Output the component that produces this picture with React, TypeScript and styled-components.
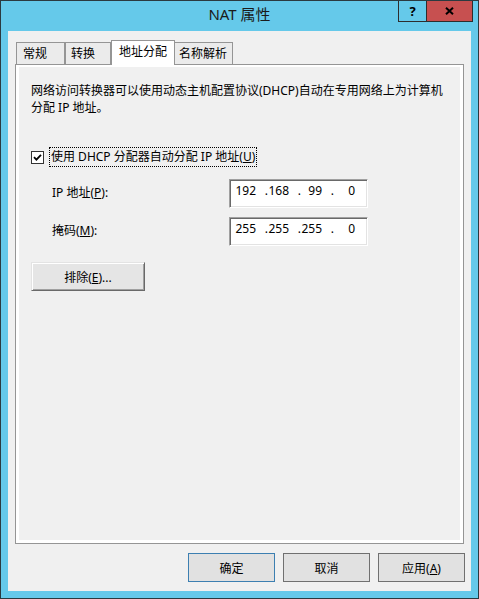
import styled, { createGlobalStyle } from "styled-components";

const GlobalStyle = createGlobalStyle`
  html, body {
    margin: 0;
    padding: 0;
  }
  body {
    font-family: "Segoe UI", "Noto Sans", "Noto Sans CJK SC", sans-serif;
    font-size: 12px;
    color: #000;
    background: #fff;
  }
`;

const Frame = styled.div`
  width: 479px;
  height: 599px;
  box-sizing: border-box;
  border: 1px solid #2b3a40;
  background: #65c9ea;
  padding: 0 7px 7px;
  display: flex;
  flex-direction: column;
`;

const TitleBar = styled.div`
  height: 30px;
  display: grid;
  grid-template-columns: 1fr auto 1fr;
`;

const Title = styled.div`
  grid-column: 2;
  align-self: center;
  font-size: 15px;
  line-height: 20px;
  padding-bottom: 4px;
  color: #1b1b1b;
  white-space: nowrap;
`;

const CaptionButtons = styled.div`
  justify-self: end;
  align-self: start;
  display: flex;
  margin-right: -2px;
`;

const CaptionButton = styled.div<{ $close?: boolean }>`
  box-sizing: border-box;
  width: ${(p) => (p.$close ? 47 : 28)}px;
  height: 21px;
  border-left: 1px solid #2d2d2d;
  border-bottom: 1px solid #2d2d2d;
  border-right: ${(p) => (p.$close ? "1px solid #2d2d2d" : "none")};
  background: ${(p) => (p.$close ? "#c75050" : "transparent")};
  display: flex;
  align-items: center;
  justify-content: center;
  font-weight: bold;
  font-size: 13px;
  line-height: 13px;
`;

const Client = styled.div`
  flex: 1;
  background: #f0f0f0;
  padding: 9px 7px 9px;
  display: flex;
  flex-direction: column;
`;

const TabStrip = styled.div`
  height: 24px;
  display: flex;
  align-items: flex-end;
  padding-left: 1px;
  position: relative;
  z-index: 1;
`;

const Tab = styled.div<{ $active?: boolean; $w: number; $pl: number; $ml?: number }>`
  box-sizing: border-box;
  width: ${(p) => p.$w}px;
  height: ${(p) => (p.$active ? 25 : 22)}px;
  margin-bottom: ${(p) => (p.$active ? -1 : 0)}px;
  margin-left: ${(p) => p.$ml ?? 0}px;
  border: 1px solid #959595;
  border-bottom: none;
  background: ${(p) => (p.$active ? "#fff" : "#ebebeb")};
  padding-left: ${(p) => p.$pl}px;
  padding-bottom: ${(p) => (p.$active ? 3 : 0)}px;
  line-height: 21px;
  white-space: nowrap;
`;

const Panel = styled.div`
  flex: 1;
  border: 1px solid #959595;
  background: #fff;
  padding: 2px 3px 3px;
  display: flex;
  flex-direction: column;
`;

const Page = styled.div`
  flex: 1;
  background: #f0f0f0;
  padding: 15px 12px 0;
  display: flex;
  flex-direction: column;
  align-items: flex-start;
`;

const Description = styled.div`
  line-height: 17px;
  white-space: nowrap;
`;

const CheckRow = styled.div`
  margin-top: 31px;
  display: flex;
  align-items: center;
`;

const CheckBox = styled.div`
  box-sizing: border-box;
  width: 13px;
  height: 13px;
  border: 1px solid #333;
  background: #fff;
  margin-right: 5px;
  display: flex;
  align-items: center;
  justify-content: center;
`;

const FocusLabel = styled.div`
  border: 1px dotted #000;
  padding: 0 1px;
  line-height: 18px;
  white-space: nowrap;
`;

const FieldRow = styled.div<{ $top: number }>`
  margin-top: ${(p) => p.$top}px;
  padding-left: 21px;
  display: flex;
  align-items: center;
`;

const FieldLabel = styled.div`
  width: 177px;
  line-height: 17px;
  padding-bottom: 3px;
  white-space: nowrap;
`;

const IpBox = styled.div`
  box-sizing: border-box;
  width: 139px;
  height: 29px;
  border: 1px solid;
  border-color: #a0a0a0 #ffffff #ffffff #a0a0a0;
  box-shadow: inset 1px 1px 0 #696969, inset -1px -1px 0 #e3e3e3;
  background: #fff;
  padding: 2px 0 0 5px;
  display: flex;
  align-items: flex-start;
  line-height: 17px;
`;

const Octet = styled.span`
  width: 21px;
  text-align: right;
`;

const Dot = styled.span`
  width: 12px;
  text-align: right;
`;

const RaisedButton = styled.button`
  margin-top: 16px;
  box-sizing: border-box;
  width: 114px;
  height: 29px;
  padding: 0;
  font: inherit;
  color: #000;
  background: #e5e5e5;
  border: 1px solid;
  border-color: #e3e3e3 #696969 #696969 #e3e3e3;
  box-shadow: inset 1px 1px 0 #fff, inset -1px -1px 0 #a0a0a0;
`;

const ButtonRow = styled.div`
  margin-top: 9px;
  margin-right: -1px;
  display: flex;
  justify-content: flex-end;
  gap: 8px;
`;

const DialogButton = styled.button<{ $default?: boolean }>`
  box-sizing: border-box;
  width: 87px;
  height: 29px;
  padding: 0;
  font: inherit;
  color: #000;
  background: #e1e1e1;
  border: 1px solid ${(p) => (p.$default ? "#3c7fb1" : "#707070")};
`;

const Key = styled.u`
  text-underline-offset: 1px;
`;

const tabs = [
  { label: "常规", w: 49, pl: 6 },
  { label: "转换", w: 46, pl: 5, ml: 0 },
  { label: "地址分配", w: 64, pl: 7, active: true },
  { label: "名称解析", w: 59, pl: 4, ml: -1 },
];

function IpAddress({ parts }: { parts: string[] }) {
  return (
    <IpBox>
      {parts.map((p, i) => (
        <span key={i} style={{ display: "contents" }}>
          <Octet>{p}</Octet>
          {i < parts.length - 1 ? <Dot>.</Dot> : null}
        </span>
      ))}
    </IpBox>
  );
}

function App() {
  return (
    <>
      <GlobalStyle />
      <Frame>
        <TitleBar>
          <Title>NAT 属性</Title>
          <CaptionButtons>
            <CaptionButton>?</CaptionButton>
            <CaptionButton $close>
              <svg width="9" height="8" viewBox="0 0 9 8">
                <path d="M1 0.8 L8 7.2 M8 0.8 L1 7.2" stroke="#000" strokeWidth="2" />
              </svg>
            </CaptionButton>
          </CaptionButtons>
        </TitleBar>
        <Client>
          <TabStrip>
            {tabs.map((t) => (
              <Tab key={t.label} $active={t.active} $w={t.w} $pl={t.pl} $ml={t.ml}>
                {t.label}
              </Tab>
            ))}
          </TabStrip>
          <Panel>
            <Page>
              <Description>
                网络访问转换器可以使用动态主机配置协议(DHCP)自动在专用网络上为计算机
                <br />
                分配 IP 地址。
              </Description>
              <CheckRow>
                <CheckBox>
                  <svg width="9" height="9" viewBox="0 0 9 9">
                    <path d="M1 4.2 L3.4 6.6 L8 1.8" fill="none" stroke="#000" strokeWidth="1.8" />
                  </svg>
                </CheckBox>
                <FocusLabel>
                  使用 DHCP 分配器自动分配 IP 地址(<Key>U</Key>)
                </FocusLabel>
              </CheckRow>
              <FieldRow $top={12}>
                <FieldLabel>
                  IP 地址(<Key>P</Key>):
                </FieldLabel>
                <IpAddress parts={["192", "168", "99", "0"]} />
              </FieldRow>
              <FieldRow $top={9}>
                <FieldLabel>
                  掩码(<Key>M</Key>):
                </FieldLabel>
                <IpAddress parts={["255", "255", "255", "0"]} />
              </FieldRow>
              <RaisedButton>
                排除(<Key>E</Key>)...
              </RaisedButton>
            </Page>
          </Panel>
          <ButtonRow>
            <DialogButton $default>确定</DialogButton>
            <DialogButton>取消</DialogButton>
            <DialogButton>
              应用(<Key>A</Key>)
            </DialogButton>
          </ButtonRow>
        </Client>
      </Frame>
    </>
  );
}

export default App;
